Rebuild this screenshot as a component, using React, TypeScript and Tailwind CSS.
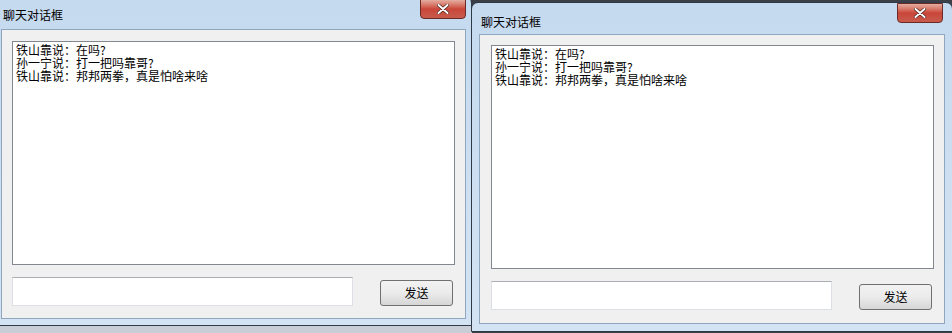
import React from 'react';

const messages = ['铁山靠说：在吗?', '孙一宁说：打一把吗靠哥?', '铁山靠说：邦邦两拳，真是怕啥来啥'];

const font = { fontFamily: '"Noto Sans CJK SC", "Noto Sans", sans-serif' };

type WindowProps = {
  className: string;
  titleClass: string;
  clientClass: string;
};

const CloseButton: React.FC<{ className: string }> = ({ className }) => (
  <div
    className={`absolute flex h-[20px] w-[46px] items-center justify-center rounded-b-[4px] border border-[#6b2a25] bg-gradient-to-b from-[#e3ada0] via-[#c9463a] to-[#c85b4c] ${className}`}
  >
    <svg width="12" height="10" viewBox="0 0 12 10">
      <path d="M1.5 1 L10.5 9 M10.5 1 L1.5 9" stroke="#3a1a18" strokeWidth="3.2" strokeLinecap="round" />
      <path d="M1.5 1 L10.5 9 M10.5 1 L1.5 9" stroke="#ffffff" strokeWidth="2" strokeLinecap="round" />
    </svg>
  </div>
);

const ChatWindow: React.FC<WindowProps> = ({ className, titleClass, clientClass }) => (
  <div
    className={`absolute flex flex-col rounded-t-[7px] border border-[#2e3a48] bg-gradient-to-b from-[#c5daef] to-[#d3e3f3] ${className}`}
  >
    <div className={`flex items-center text-[12px] leading-[14px] text-black ${titleClass}`} style={font}>
      聊天对话框
    </div>
    <div className={`flex flex-col border border-[#8fa6bf] bg-[#f0f0f0] ${clientClass}`}>
      <div
        className="flex h-[224px] w-[443px] flex-col border border-[#828790] bg-white px-[3px] pt-[1px] text-[12px] leading-[13px] text-black"
        style={font}
      >
        {messages.map((m) => (
          <div key={m}>{m}</div>
        ))}
      </div>
      <div className="mt-[12px] flex items-start">
        <div className="h-[29px] w-[341px] border border-[#dcdfe3] border-t-[#abadb3] bg-white" />
        <button
          className="ml-[27px] mt-[3px] flex h-[26px] w-[73px] items-center justify-center rounded-[3px] border border-[#707070] bg-gradient-to-b from-[#f2f2f2] via-[#ebebeb] to-[#d6d6d6] text-[12px] text-black"
          style={font}
        >
          发送
        </button>
      </div>
    </div>
  </div>
);

export default function App() {
  return (
    <div className="relative h-[333px] w-[952px] overflow-hidden bg-[#3b4048]">
      <div className="absolute bottom-0 left-0 h-[9px] w-[472px] bg-[#c9ced6]" />
      <ChatWindow
        className="left-[-7px] top-[-4px] h-[330px] w-[479px] pl-[7px] pr-[5px] pb-[6px]"
        titleClass="h-[32px] pl-[2px] pt-[4px]"
        clientClass="h-[290px] w-[465px] pl-[10px] pt-[11px]"
      />
      <CloseButton className="left-[420px] top-[-1px]" />
      <ChatWindow
        className="left-[471px] top-[2px] h-[330px] w-[482px] pl-[7px] pr-[7px] pb-[6px]"
        titleClass="h-[31px] pl-[2px] pt-[6px]"
        clientClass="h-[290px] w-[466px] pl-[11px] pt-[10px]"
      />
      <CloseButton className="left-[897px] top-[3px]" />
    </div>
  );
}
